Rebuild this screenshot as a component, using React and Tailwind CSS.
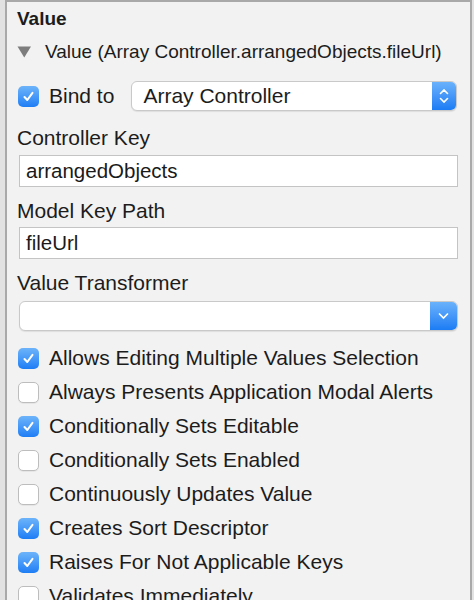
import React from "react";

const rows = [
  ["Allows Editing Multiple Values Selection", true],
  ["Always Presents Application Modal Alerts", false],
  ["Conditionally Sets Editable", true],
  ["Conditionally Sets Enabled", false],
  ["Continuously Updates Value", false],
  ["Creates Sort Descriptor", true],
  ["Raises For Not Applicable Keys", true],
  ["Validates Immediately", false],
];

function Check({ on }) {
  if (on) {
    return (
      <span className="flex h-[21px] w-[21px] shrink-0 items-center justify-center rounded-[5px] bg-gradient-to-b from-[#6cb3fa] to-[#1c7ef5]">
        <svg width="13" height="13" viewBox="0 0 13 13">
          <path d="M2.5 7 L5.3 10 L10.5 2.8" fill="none" stroke="white" strokeWidth="2" strokeLinecap="round" strokeLinejoin="round" />
        </svg>
      </span>
    );
  }
  return <span className="block h-[21px] w-[21px] shrink-0 rounded-[5px] border border-[#bdbdbd] bg-white shadow-[0_1px_0_rgba(0,0,0,0.05)]" />;
}

function Field({ value }) {
  return (
    <div className="ml-[2px] flex h-[32px] w-[439px] items-center border border-[#c4c4c4] bg-white px-[6px] text-[20.5px] text-[#1a1a1a]">
      {value}
    </div>
  );
}

export default function App() {
  return (
    <div className="h-[600px] w-[474px] overflow-hidden bg-[#e2e2e2] font-['Liberation_Sans',Arial,sans-serif]">
      <div className="ml-[5px] h-[620px] w-[467px] border-l-2 border-r-2 border-t-2 border-[#a9a9a9] bg-[#f2f2f2] pl-[10px] text-[#1c1c1c]">
        <div className="pt-[6px] text-[19px] font-bold leading-[22px]">Value</div>

        <div className="mt-[10px] flex items-center gap-[13px]">
          <svg width="15" height="12" viewBox="0 0 15 12">
            <path d="M0.5 0.5 L14 0.5 L7.25 11.5 Z" fill="#7d7d7d" />
          </svg>
          <span className="text-[19px] leading-[24px]">Value (Array Controller.arrangedObjects.fileUrl)</span>
        </div>

        <div className="mt-[17px] flex items-center">
          <span className="ml-[1px]"><Check on /></span>
          <span className="ml-[10px] text-[21px] leading-[24px]">Bind to</span>
          <div className="ml-[17px] mr-[13px] flex h-[30px] flex-1 overflow-hidden rounded-[6px] border border-[#c9c9c9] bg-white shadow-[0_1px_1px_rgba(0,0,0,0.08)]">
            <span className="flex flex-1 items-center pl-[11px] text-[21px]">Array Controller</span>
            <span className="flex w-[24px] flex-col items-center justify-center gap-[2px] bg-gradient-to-b from-[#69b1fb] to-[#1a7cf4]">
              <svg width="10" height="7" viewBox="0 0 10 7"><path d="M1.5 5.5 L5 2 L8.5 5.5" fill="none" stroke="white" strokeWidth="1.6" strokeLinecap="round" /></svg>
              <svg width="10" height="7" viewBox="0 0 10 7"><path d="M1.5 1.5 L5 5 L8.5 1.5" fill="none" stroke="white" strokeWidth="1.6" strokeLinecap="round" /></svg>
            </span>
          </div>
        </div>

        <div className="mt-[15px] text-[21px] leading-[24px]">Controller Key</div>
        <div className="mt-[5px]"><Field value="arrangedObjects" /></div>

        <div className="mt-[12px] text-[21px] leading-[24px]">Model Key Path</div>
        <div className="mt-[4px]"><Field value="fileUrl" /></div>

        <div className="mt-[12px] text-[21px] leading-[24px]">Value Transformer</div>
        <div className="ml-[2px] mt-[6px] flex h-[30px] w-[439px] overflow-hidden rounded-[6px] border border-[#c9c9c9] bg-white shadow-[0_1px_1px_rgba(0,0,0,0.08)]">
          <span className="flex-1" />
          <span className="flex w-[27px] items-center justify-center bg-gradient-to-b from-[#69b1fb] to-[#1a7cf4]">
            <svg width="11" height="8" viewBox="0 0 11 8"><path d="M1.5 2 L5.5 6 L9.5 2" fill="none" stroke="white" strokeWidth="1.7" strokeLinecap="round" /></svg>
          </span>
        </div>

        <div className="mt-[10px] flex flex-col">
          {rows.map(([label, on]) => (
            <div key={label} className="flex h-[34px] items-center">
              <span className="ml-[1px]"><Check on={on} /></span>
              <span className="ml-[10px] text-[21px] leading-[24px]">{label}</span>
            </div>
          ))}
        </div>
      </div>
    </div>
  );
}
